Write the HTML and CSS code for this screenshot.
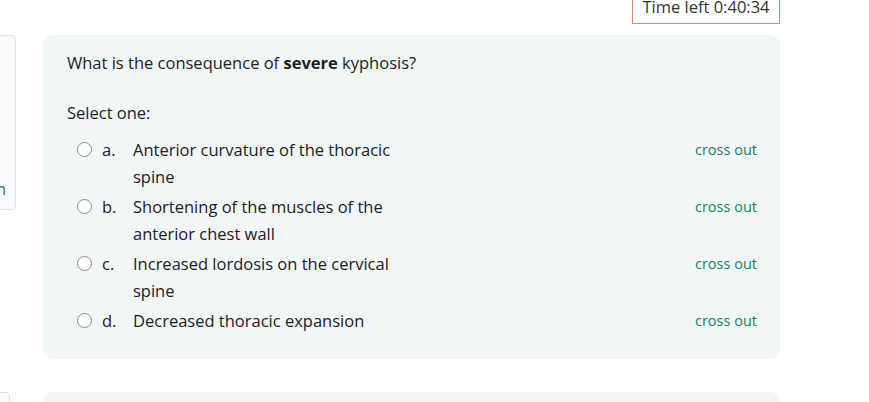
FILE: index.html
```html
<!DOCTYPE html>
<html lang="en">
<head>
<meta charset="utf-8">
<title>Quiz</title>
<link rel="stylesheet" href="styles.css">
</head>
<body>
<div class="topbar">
  <div class="timer">Time left 0:40:34</div>
</div>
<div class="row">
  <aside class="side side-nav">
    <a class="side-link" href="#">Finish attempt n</a>
  </aside>
  <section class="card">
    <p class="qtext">What is the consequence of <strong>severe</strong> kyphosis?</p>
    <p class="prompt">Select one:</p>
    <div class="answers">
      <div class="option">
        <span class="radio"></span>
        <span class="letter">a.</span>
        <span class="label">Anterior curvature of the thoracic spine</span>
        <a class="cross" href="#">cross out</a>
      </div>
      <div class="option">
        <span class="radio"></span>
        <span class="letter">b.</span>
        <span class="label">Shortening of the muscles of the anterior chest wall</span>
        <a class="cross" href="#">cross out</a>
      </div>
      <div class="option">
        <span class="radio"></span>
        <span class="letter">c.</span>
        <span class="label">Increased lordosis on the cervical spine</span>
        <a class="cross" href="#">cross out</a>
      </div>
      <div class="option">
        <span class="radio"></span>
        <span class="letter">d.</span>
        <span class="label">Decreased thoracic expansion</span>
        <a class="cross" href="#">cross out</a>
      </div>
    </div>
  </section>
</div>
<div class="row">
  <aside class="side side-small"></aside>
  <section class="card card-next"></section>
</div>
</body>
</html>
```
FILE: styles.css
```css
html, body {
  margin: 0;
  padding: 0;
  background: #ffffff;
  overflow: hidden;
}
body {
  font-family: "Open Sans", "Noto Sans", sans-serif;
  font-size: 16px;
  color: #1d2125;
  width: 869px;
  height: 402px;
}
.topbar {
  display: flex;
  justify-content: flex-end;
  padding-right: 89px;
  height: 24px;
  margin-bottom: 11px;
}
.timer {
  margin-top: -8px;
  height: 32px;
  box-sizing: border-box;
  width: 148px;
  border: 1px solid #e6826f;
  border-top: none;
  font-size: 16.5px;
  line-height: 30px;
  text-align: center;
  color: #333333;
}
.row {
  display: flex;
  align-items: flex-start;
  gap: 27px;
  margin-bottom: 33px;
}
.side {
  box-sizing: border-box;
  background: #f8f9fa;
  border: 1px solid #dee2e6;
  border-radius: 4px;
  flex-shrink: 0;
}
.side-nav {
  width: 160px;
  margin-left: -144px;
  height: 175px;
  display: flex;
  justify-content: flex-end;
  align-items: flex-end;
  padding: 0 9px 9px 0;
}
.side-link {
  color: #1b7f6a;
  text-decoration: none;
  font-size: 16px;
  white-space: nowrap;
}
.side-small {
  width: 160px;
  margin-left: -150px;
  margin-right: 6px;
  height: 40px;
}
.card {
  box-sizing: border-box;
  width: 737px;
  background: #f1f6f6;
  border-radius: 10px;
  padding: 16px 24px 25px;
}
.card-next {
  height: 40px;
}
.qtext {
  margin: 0;
  font-size: 16.5px;
  line-height: 24px;
}
.qtext strong {
  font-weight: 700;
}
.prompt {
  margin: 26px 0 11px;
  font-size: 16.5px;
  line-height: 24px;
}
.answers {
  display: flex;
  flex-direction: column;
  gap: 3px;
}
.option {
  display: flex;
  align-items: flex-start;
  font-size: 16.5px;
  line-height: 27px;
}
.radio {
  box-sizing: border-box;
  width: 15px;
  height: 15px;
  border: 1.5px solid #8a8d90;
  border-radius: 50%;
  background: #ffffff;
  margin: 6px 0 0 10px;
  flex-shrink: 0;
}
.letter {
  width: 31px;
  margin-left: 10px;
  flex-shrink: 0;
}
.label {
  width: 285px;
}
.cross {
  margin-left: auto;
  font-size: 14.5px;
  color: #1b7f5f;
  text-decoration: none;
  line-height: 27px;
  width: 61px;
  white-space: nowrap;
}
```
